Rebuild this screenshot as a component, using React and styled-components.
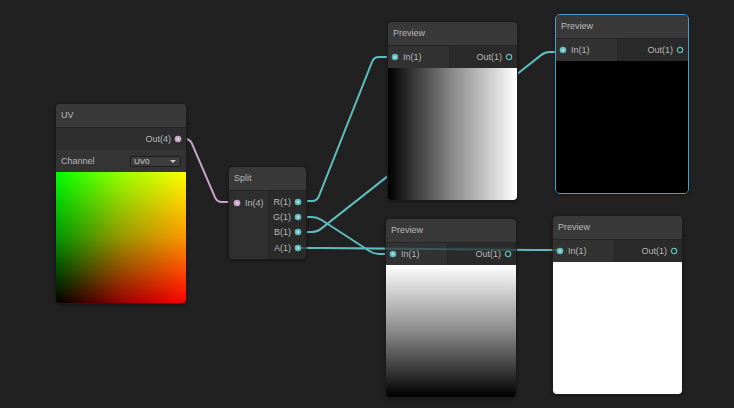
import React from "react";
import styled, { createGlobalStyle } from "styled-components";

const TEAL = "#5fbcbd";
const PINK = "#c9a3c9";

const GlobalStyle = createGlobalStyle`
    html, body {
        margin: 0;
        padding: 0;
        background: #202020;
    }
    * {
        box-sizing: border-box;
    }
`;

// wire from port (x1,y1) to port (x2,y2): horizontal stubs, straight diagonal, rounded corners
const edgePath = (x1, y1, x2, y2, s1 = 18, s2 = 18, r = 5) => {
    const ax = x1 + s1;
    const bx = x2 - s2;
    const dx = bx - ax;
    const dy = y2 - y1;
    const len = Math.hypot(dx, dy) || 1;
    const ux = dx / len;
    const uy = dy / len;
    const rr = Math.min(r, len / 2, s1, s2);
    return [
        `M ${x1} ${y1}`,
        `L ${ax - rr} ${y1}`,
        `Q ${ax} ${y1} ${ax + ux * rr} ${y1 + uy * rr}`,
        `L ${bx - ux * rr} ${y2 - uy * rr}`,
        `Q ${bx} ${y2} ${bx + rr} ${y2}`,
        `L ${x2} ${y2}`,
    ].join(" ");
};

const wires = [
    { id: "uv", d: edgePath(179, 139, 236, 202, 11, 19), color: PINK },
    { id: "r", d: edgePath(299, 201, 394, 57, 18, 20), color: TEAL },
    { id: "g", d: edgePath(299, 217, 392, 254, 18, 18), color: TEAL },
    { id: "b", d: edgePath(299, 232, 563, 52, 18, 18), color: TEAL },
    { id: "a", d: edgePath(299, 248, 559, 250, 18, 18), color: TEAL },
];

const Dot = ({ color = TEAL, connected = true }) => (
    <DotSvg width="8" height="8" viewBox="0 0 8 8">
        {connected ? (
            <>
                <circle cx="4" cy="4" r="3.3" fill={color} />
                <circle cx="4" cy="4" r="1.5" fill="#e6f7f7" opacity="0.55" />
            </>
        ) : (
            <circle cx="4" cy="4" r="2.6" fill="#202020" stroke={color} strokeWidth="1.3" />
        )}
    </DotSvg>
);

const PreviewNode = ({ x, y, w, selected, fill }) => (
    <NodeStyle $x={x} $y={y} $w={w} $selected={selected}>
        <HeaderStyle>Preview</HeaderStyle>
        <PortRowStyle>
            <InSideStyle $w={62}>
                <Dot />
                <PortLabelStyle>In(1)</PortLabelStyle>
            </InSideStyle>
            <OutSideStyle>
                <PortLabelStyle>Out(1)</PortLabelStyle>
                <Dot connected={false} />
            </OutSideStyle>
        </PortRowStyle>
        <PreviewImageStyle $fill={fill} />
    </NodeStyle>
);

const App = () => {
    return (
        <>
            <GlobalStyle />
            <CanvasStyle>
                <WireLayerStyle width="734" height="408">
                    {wires.map((w) => (
                        <path key={w.id} d={w.d} stroke={w.color} strokeWidth="2" fill="none" strokeLinejoin="round" />
                    ))}
                </WireLayerStyle>

                <NodeStyle $x={55} $y={103} $w={132}>
                    <HeaderStyle>UV</HeaderStyle>
                    <OutRowStyle>
                        <PortLabelStyle>Out(4)</PortLabelStyle>
                        <Dot color={PINK} />
                    </OutRowStyle>
                    <FieldRowStyle>
                        <FieldLabelStyle>Channel</FieldLabelStyle>
                        <DropdownStyle>
                            <span>UV0</span>
                            <ArrowStyle />
                        </DropdownStyle>
                    </FieldRowStyle>
                    <PreviewImageStyle $fill="uv" $h={131} />
                </NodeStyle>

                <NodeStyle $x={228} $y={166} $w={79}>
                    <HeaderStyle>Split</HeaderStyle>
                    <SplitBodyStyle>
                        <SplitInStyle>
                            <SplitPortStyle>
                                <Dot color={PINK} />
                                <PortLabelStyle>In(4)</PortLabelStyle>
                            </SplitPortStyle>
                        </SplitInStyle>
                        <SplitOutStyle>
                            {["R(1)", "G(1)", "B(1)", "A(1)"].map((p) => (
                                <SplitPortStyle key={p} $right>
                                    <PortLabelStyle>{p}</PortLabelStyle>
                                    <Dot />
                                </SplitPortStyle>
                            ))}
                        </SplitOutStyle>
                    </SplitBodyStyle>
                </NodeStyle>

                <PreviewNode x={387} y={21} w={131} fill="hgrad" />
                <PreviewNode x={555} y={14} w={134} selected fill="black" />
                <PreviewNode x={385} y={218} w={132} fill="vgrad" />
                <PreviewNode x={552} y={215} w={131} fill="white" />

                <OverlayStyle width="734" height="408">
                    <path d={wires[4].d} stroke={TEAL} strokeWidth="2" fill="none" opacity="0.28" />
                </OverlayStyle>
            </CanvasStyle>
        </>
    );
};

export default App;

// ==========================================   STYLES   ========================================== //

const CanvasStyle = styled.div`
    position: relative;
    width: 734px;
    height: 408px;
    overflow: hidden;
    background: #212121;
    font-family: "Liberation Sans", Arial, sans-serif;
`;

const WireLayerStyle = styled.svg`
    position: absolute;
    left: 0;
    top: 0;
`;

const OverlayStyle = styled.svg`
    position: absolute;
    left: 0;
    top: 0;
    pointer-events: none;
`;

const NodeStyle = styled.div`
    position: absolute;
    left: ${({ $x }) => $x}px;
    top: ${({ $y }) => $y}px;
    width: ${({ $w }) => $w}px;
    display: flex;
    flex-direction: column;
    background: #2b2b2b;
    border-radius: 5px;
    overflow: hidden;
    border: ${({ $selected }) => ($selected ? "1.5px solid #4b9ecf" : "1px solid #1c1c1c")};
    box-shadow: 0 1px 3px rgba(0, 0, 0, 0.4);
`;

const HeaderStyle = styled.div`
    height: 24px;
    flex: 0 0 auto;
    display: flex;
    align-items: center;
    padding: 0 0 1px 5px;
    background: #393939;
    color: #bababa;
    font-size: 9px;
    border-bottom: 1px solid #262626;
`;

const PortRowStyle = styled.div`
    height: 22px;
    display: flex;
    flex: 0 0 auto;
`;

const InSideStyle = styled.div`
    width: ${({ $w }) => $w}px;
    display: flex;
    align-items: center;
    gap: 4px;
    padding-left: 3px;
    background: #323232;
    border-right: 1px solid #262626;
`;

const OutSideStyle = styled.div`
    flex: 1;
    display: flex;
    align-items: center;
    justify-content: flex-end;
    gap: 3px;
    padding-right: 4px;
    background: #2a2a2a;
`;

const PortLabelStyle = styled.span`
    color: #b8b8b8;
    font-size: 9px;
    white-space: nowrap;
`;

const DotSvg = styled.svg`
    display: block;
    flex: 0 0 auto;
`;

const OutRowStyle = styled.div`
    height: 22px;
    display: flex;
    align-items: center;
    justify-content: flex-end;
    gap: 3px;
    padding-right: 4px;
    background: #2d2d2d;
`;

const FieldRowStyle = styled.div`
    height: 22px;
    display: flex;
    align-items: center;
    justify-content: space-between;
    padding: 0 5px 0 5px;
    background: #343434;
`;

const FieldLabelStyle = styled.span`
    color: #b8b8b8;
    font-size: 9px;
`;

const DropdownStyle = styled.div`
    width: 51px;
    height: 11px;
    display: flex;
    align-items: center;
    justify-content: space-between;
    padding: 0 4px 0 3px;
    background: #3e3e3e;
    border: 1px solid #1e1e1e;
    border-radius: 2px;
    color: #d0d0d0;
    font-size: 8px;
`;

const ArrowStyle = styled.span`
    width: 0;
    height: 0;
    border-left: 3px solid transparent;
    border-right: 3px solid transparent;
    border-top: 3px solid #c8c8c8;
`;

const fills = {
    uv: `linear-gradient(to right, #000 0%, rgb(150, 0, 0) 50%, #ff0000 100%),
         linear-gradient(to top, #000 0%, rgb(0, 150, 0) 50%, #00ff00 100%)`,
    hgrad: "linear-gradient(to right, #000 0%, #8a8a8a 50%, #fff 100%)",
    vgrad: "linear-gradient(to bottom, #fff 0%, #8a8a8a 50%, #000 100%)",
    black: "#000",
    white: "#fff",
};

const PreviewImageStyle = styled.div`
    height: ${({ $h }) => $h || 132}px;
    flex: 0 0 auto;
    background: ${({ $fill }) => fills[$fill]};
    background-blend-mode: ${({ $fill }) => ($fill === "uv" ? "screen" : "normal")};
`;

const SplitBodyStyle = styled.div`
    display: flex;
    height: 68px;
`;

const SplitInStyle = styled.div`
    width: 40px;
    padding-top: 4px;
    background: #2f2f2f;
    border-right: 1px solid #262626;
`;

const SplitOutStyle = styled.div`
    flex: 1;
    padding-top: 3px;
    display: flex;
    flex-direction: column;
    background: #2a2a2a;
`;

const SplitPortStyle = styled.div`
    height: 15.3px;
    display: flex;
    align-items: center;
    justify-content: ${({ $right }) => ($right ? "flex-end" : "flex-start")};
    gap: ${({ $right }) => ($right ? 3 : 4)}px;
    padding: ${({ $right }) => ($right ? "0 4px 0 0" : "0 0 0 4px")};
`;
